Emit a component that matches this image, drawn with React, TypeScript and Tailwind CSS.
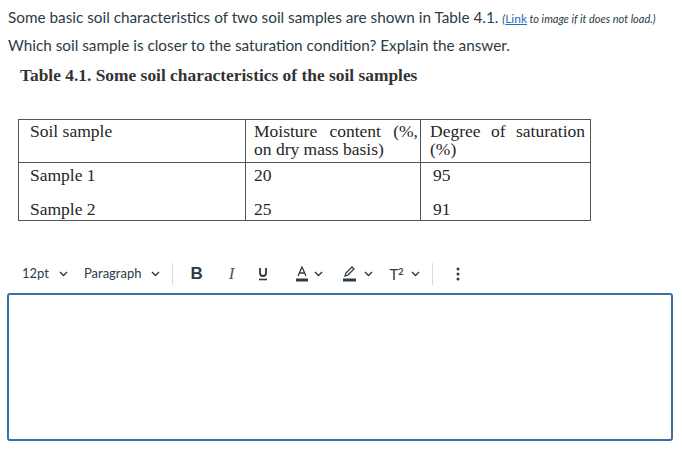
import React from 'react';

const Chevron = () => (
  <svg width="9" height="6" viewBox="0 0 9 6" className="text-[#2d3b45]">
    <path d="M1 1l3.5 3.5L8 1" fill="none" stroke="currentColor" strokeWidth="1.4" />
  </svg>
);

export default function App() {
  return (
    <div className="w-[682px] h-[452px] bg-white font-['Lato',sans-serif] text-[#2d3b45] overflow-hidden">
      {/* Question text */}
      <div className="pl-[8px] pt-[4px] text-[15.3px] leading-[26px]">
        <p>
          Some basic soil characteristics of two soil samples are shown in Table 4.1.{' '}
          <span className="text-[11px] italic">
            (<span className="text-[#2270b7] underline not-italic text-[12px]">Link</span> to image if it does not load.)
          </span>
        </p>
        <p>Which soil sample is closer to the saturation condition? Explain the answer.</p>
      </div>

      {/* Table image */}
      <div className="font-['Liberation_Serif',serif] text-[#262626]">
        <p className="ml-[20px] mt-[7px] text-[17.4px] leading-[20px] font-semibold text-[#333]">
          Table 4.1. Some soil characteristics of the soil samples
        </p>
        <table className="ml-[18px] mt-[34px] border-collapse text-[17.5px] leading-[18px]">
          <tbody>
            <tr className="h-[43px]">
              <td className="w-[227px] border border-[#555] pl-[11px] pt-[2px] align-top">Soil sample</td>
              <td className="w-[175px] border border-[#555] pl-[8px] pr-[2px] pt-[2px] align-top text-justify">
                Moisture content (%, on dry mass basis)
              </td>
              <td className="w-[170px] border border-[#555] pl-[9px] pr-[5px] pt-[2px] align-top text-justify">
                Degree of saturation (%)
              </td>
            </tr>
            <tr className="h-[29px]">
              <td className="border-x border-[#555] pl-[11px] pt-[3px] align-top">Sample 1</td>
              <td className="border-x border-[#555] pl-[8px] pt-[3px] align-top">20</td>
              <td className="border-x border-[#555] pl-[12px] pt-[3px] align-top">95</td>
            </tr>
            <tr className="h-[29px]">
              <td className="border-x border-b border-[#555] pl-[11px] pt-[8px] align-top">Sample 2</td>
              <td className="border-x border-b border-[#555] pl-[8px] pt-[8px] align-top">25</td>
              <td className="border-x border-b border-[#555] pl-[12px] pt-[8px] align-top">91</td>
            </tr>
          </tbody>
        </table>
      </div>

      {/* Editor toolbar */}
      <div className="mt-[39px] ml-[22px] h-[28px] flex items-center text-[13px] text-[#2d3b45]">
        <span>12pt</span>
        <span className="ml-[10px]"><Chevron /></span>
        <span className="ml-[16px]">Paragraph</span>
        <span className="ml-[9px]"><Chevron /></span>
        <span className="ml-[12px] w-px h-[22px] bg-[#d7dade]" />
        <span className="ml-[18px] font-['Liberation_Sans',sans-serif] font-bold text-[17px]">B</span>
        <span className="ml-[26px] font-['Liberation_Serif',serif] italic text-[17px] text-[#555]">I</span>
        <span className="ml-[24px] flex flex-col items-center">
          <svg width="10" height="14" viewBox="0 0 10 14">
            <path d="M2 1v5a3 3 0 006 0V1" fill="none" stroke="#2d3b45" strokeWidth="1.8" />
            <path d="M1 12.5h8" stroke="#2d3b45" strokeWidth="1.6" />
          </svg>
        </span>
        <span className="ml-[28px]">
          <svg width="12" height="16" viewBox="0 0 12 16">
            <path d="M2 10L6 1l4 9M3.5 7h5" fill="none" stroke="#2d3b45" strokeWidth="1.3" />
            <rect x="0" y="12.5" width="12" height="3" fill="#2d3b45" />
          </svg>
        </span>
        <span className="ml-[6px]"><Chevron /></span>
        <span className="ml-[20px]">
          <svg width="13" height="16" viewBox="0 0 13 16">
            <path d="M2 10l1-3 6-6 2 2-6 6-3 1z" fill="none" stroke="#2d3b45" strokeWidth="1.3" />
            <rect x="0" y="12.5" width="13" height="3" fill="#2d3b45" />
          </svg>
        </span>
        <span className="ml-[8px]"><Chevron /></span>
        <span className="ml-[16px] text-[15px] leading-none">
          T<sup className="text-[9px] font-bold">2</sup>
        </span>
        <span className="ml-[7px]"><Chevron /></span>
        <span className="ml-[12px] w-px h-[22px] bg-[#d7dade]" />
        <span className="ml-[23px]">
          <svg width="4" height="14" viewBox="0 0 4 14">
            <circle cx="2" cy="2" r="1.5" fill="#2d3b45" />
            <circle cx="2" cy="7" r="1.5" fill="#2d3b45" />
            <circle cx="2" cy="12" r="1.5" fill="#2d3b45" />
          </svg>
        </span>
      </div>

      {/* Answer box */}
      <div className="ml-[7px] mt-[5px] w-[666px] h-[148px] border-2 border-[#3c6da3] rounded-[3px]" />
    </div>
  );
}
